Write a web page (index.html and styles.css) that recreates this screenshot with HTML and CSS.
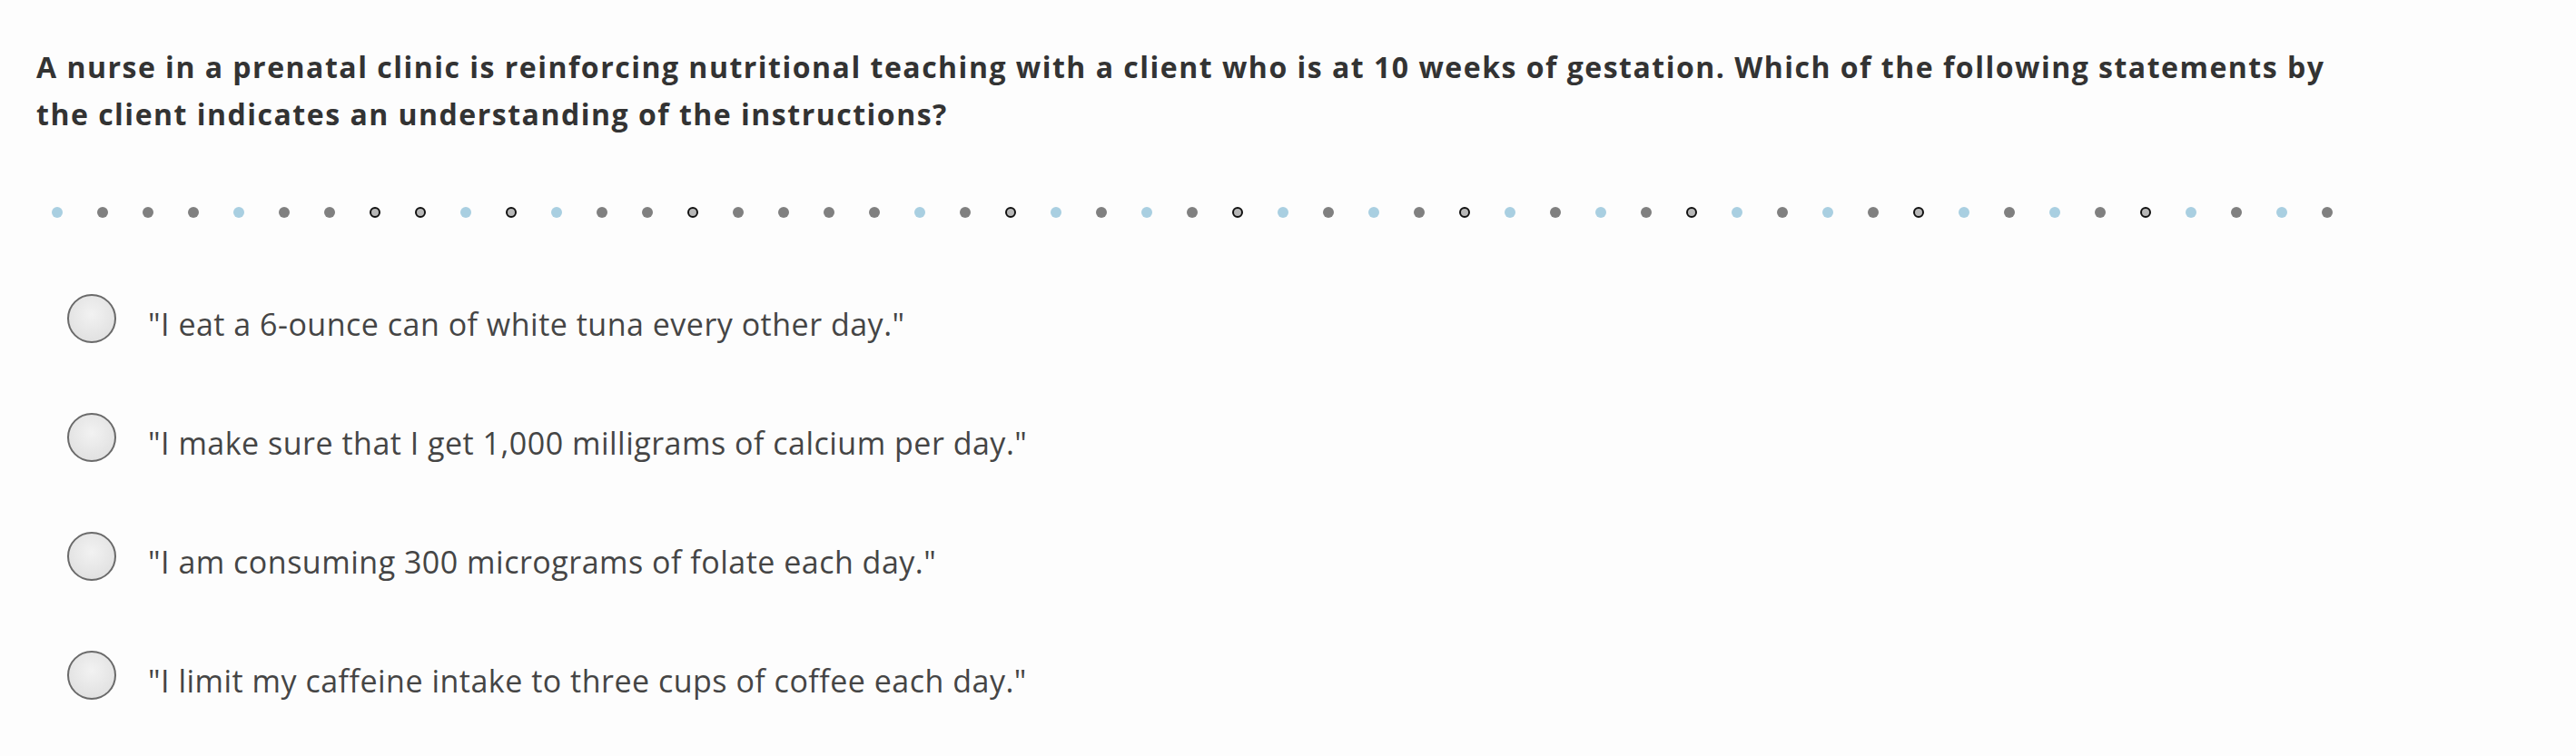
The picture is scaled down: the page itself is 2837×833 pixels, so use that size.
FILE: index.html
```html
<!DOCTYPE html>
<html>
<head>
<meta charset="utf-8">
<link rel="stylesheet" href="styles.css">
</head>
<body>
<div class="page">
  <p class="question">A nurse in a prenatal clinic is reinforcing nutritional teaching with a client who is at 10 weeks of gestation. Which of the following statements by the client indicates an understanding of the instructions?</p>
  <div class="dots">
    <span class="dot b"></span><span class="dot g"></span><span class="dot g"></span><span class="dot g"></span><span class="dot b"></span><span class="dot g"></span><span class="dot g"></span><span class="dot r"></span><span class="dot r"></span><span class="dot b"></span><span class="dot r"></span><span class="dot b"></span><span class="dot g"></span><span class="dot g"></span><span class="dot r"></span><span class="dot g"></span><span class="dot g"></span>
    <span class="dot g"></span><span class="dot g"></span><span class="dot b"></span><span class="dot g"></span><span class="dot r"></span><span class="dot b"></span><span class="dot g"></span><span class="dot b"></span><span class="dot g"></span><span class="dot r"></span><span class="dot b"></span><span class="dot g"></span><span class="dot b"></span><span class="dot g"></span><span class="dot r"></span><span class="dot b"></span><span class="dot g"></span><span class="dot b"></span>
    <span class="dot g"></span><span class="dot r"></span><span class="dot b"></span><span class="dot g"></span><span class="dot b"></span><span class="dot g"></span><span class="dot r"></span><span class="dot b"></span><span class="dot g"></span><span class="dot b"></span><span class="dot g"></span><span class="dot r"></span><span class="dot b"></span><span class="dot g"></span><span class="dot b"></span><span class="dot g"></span>
  </div>
  <ul class="options">
    <li class="option"><span class="radio"></span><span class="label">"I eat a 6-ounce can of white tuna every other day."</span></li>
    <li class="option"><span class="radio"></span><span class="label">"I make sure that I get 1,000 milligrams of calcium per day."</span></li>
    <li class="option"><span class="radio"></span><span class="label">"I am consuming 300 micrograms of folate each day."</span></li>
    <li class="option"><span class="radio"></span><span class="label">"I limit my caffeine intake to three cups of coffee each day."</span></li>
  </ul>
</div>
</body>
</html>
```
FILE: styles.css
```css
html, body {
  margin: 0;
  padding: 0;
  background: #fdfdfd;
}
body {
  font-family: "Open Sans", "Liberation Sans", sans-serif;
  width: 2837px;
  height: 833px;
  overflow: hidden;
}
.page {
  padding: 48px 0 0 40px;
}
.question {
  margin: 0;
  width: 2560px;
  font-size: 32px;
  line-height: 52px;
  font-weight: 700;
  letter-spacing: 1.5px;
  color: #333;
}
.dots {
  display: flex;
  align-items: center;
  gap: 38px;
  margin: 76px 0 0 17px;
  height: 12px;
}
.dot {
  width: 12px;
  height: 12px;
  border-radius: 50%;
  box-sizing: border-box;
  flex: none;
}
.dot.b { background: #a9cfe1; }
.dot.g { background: #808080; }
.dot.r { background: #b8b8b8; border: 2px solid #111; }
.options {
  list-style: none;
  margin: 45px 0 0 0;
  padding: 0;
}
.option {
  display: flex;
  align-items: center;
  height: 131px;
  padding-left: 34px;
}
.radio {
  width: 54px;
  height: 54px;
  box-sizing: border-box;
  border-radius: 50%;
  border: 2px solid #6a6a6a;
  background: radial-gradient(circle at 50% 40%, #f2f2f2, #dcdcdc);
  flex: none;
}
.label {
  margin-left: 35px;
  font-size: 34px;
  letter-spacing: 0.5px;
  color: #454545;
  margin-top: 12px;
}
```
